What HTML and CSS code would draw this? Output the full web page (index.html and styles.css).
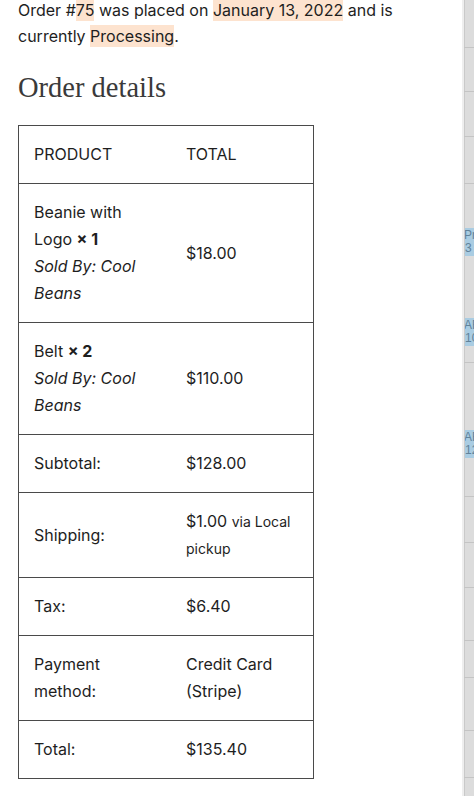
FILE: index.html
```html
<!DOCTYPE html>
<html lang="en">
<head>
<meta charset="utf-8">
<title>Order #75</title>
<link rel="stylesheet" href="styles.css">
</head>
<body>
<main class="content">
  <p class="intro">Order #<mark>75</mark> was placed on <mark>January 13, 2022</mark> and is currently <mark>Processing</mark>.</p>
  <h2 class="title">Order details</h2>
  <table class="order">
    <thead>
      <tr><th class="c1">Product</th><th class="c2">Total</th></tr>
    </thead>
    <tbody>
      <tr>
        <td class="c1">Beanie with Logo <strong>× 1</strong><br><em>Sold By: Cool Beans</em></td>
        <td class="c2">$18.00</td>
      </tr>
      <tr>
        <td class="c1">Belt <strong>× 2</strong><br><em>Sold By: Cool Beans</em></td>
        <td class="c2">$110.00</td>
      </tr>
    </tbody>
    <tfoot>
      <tr><td class="c1">Subtotal:</td><td class="c2">$128.00</td></tr>
      <tr><td class="c1">Shipping:</td><td class="c2">$1.00 <small>via Local pickup</small></td></tr>
      <tr><td class="c1">Tax:</td><td class="c2">$6.40</td></tr>
      <tr><td class="c1">Payment method:</td><td class="c2">Credit Card (Stripe)</td></tr>
      <tr><td class="c1">Total:</td><td class="c2">$135.40</td></tr>
    </tfoot>
  </table>
</main>
<aside class="side">
  <div class="row h48"></div>
  <div class="row h44"></div>
  <div class="row h45"></div>
  <div class="row h47"></div>
  <div class="row slot1"><div class="evt">Pr<br>3 -</div></div>
  <div class="row slot2"><div class="evt">AF<br>10</div></div>
  <div class="row slot3"><div class="evt">AF<br>12</div></div>
  <div class="row h46"></div>
  <div class="row h45"></div>
  <div class="row h53"></div>
  <div class="row h37"></div>
  <div class="row h53"></div>
  <div class="row h47"></div>
</aside>
</body>
</html>
```
FILE: styles.css
```css
html, body {
  margin: 0;
  padding: 0;
  background: #ffffff;
}
body {
  display: flex;
  height: 796px;
  overflow: hidden;
  font-family: Inter, "Noto Sans", "Liberation Sans", sans-serif;
  color: #1e1e1e;
}
.content {
  flex: none;
  width: 462px;
  box-sizing: border-box;
  padding: 0 18px;
  margin-top: -3px;
}
.intro {
  margin: 0;
  font-size: 16px;
  line-height: 26px;
}
.intro mark {
  background: #fde3cf;
  color: inherit;
  padding: 1px 0;
}
.title {
  margin: 21px 0 19px;
  font-family: "Liberation Serif", "DejaVu Serif", serif;
  font-weight: normal;
  font-size: 28.5px;
  line-height: 36px;
  color: #3a3a3a;
}
.order {
  border-collapse: collapse;
  width: 296px;
  border: 1px solid #4a4a4a;
  table-layout: fixed;
}
.order th,
.order td {
  border-top: 1px solid #4a4a4a;
  padding: 15px;
  font-size: 16px;
  line-height: 27px;
  font-weight: normal;
  text-align: left;
  vertical-align: middle;
}
.order th {
  text-transform: uppercase;
}
.order .c1 {
  width: 122px;
}
.order strong {
  font-weight: 700;
}
.order small {
  font-size: 14px;
}
.side {
  flex: 1;
  background: #dcdcdc;
  border-left: 2px solid #eeeeee;
  box-shadow: inset 1px 0 0 #c9c9c9;
  overflow: hidden;
}
.row {
  border-bottom: 1px solid #c4c4c4;
  box-sizing: border-box;
}
.h37 { height: 37px; }
.h44 { height: 44px; }
.h45 { height: 45px; }
.h46 { height: 46px; }
.h47 { height: 47px; }
.h48 { height: 48px; }
.h53 { height: 53px; }
.slot1 { height: 70px; padding-top: 44px; }
.slot2 { height: 109px; padding-top: 64px; }
.slot3 { height: 134px; padding-top: 67px; }
.evt {
  height: 28px;
  margin-left: 1px;
  background: #a9cce2;
  color: #60829a;
  font-family: "Liberation Sans", sans-serif;
  font-size: 12px;
  line-height: 13px;
  padding-top: 1px;
  box-sizing: border-box;
  white-space: nowrap;
  overflow: hidden;
  text-indent: -1px;
}
```
